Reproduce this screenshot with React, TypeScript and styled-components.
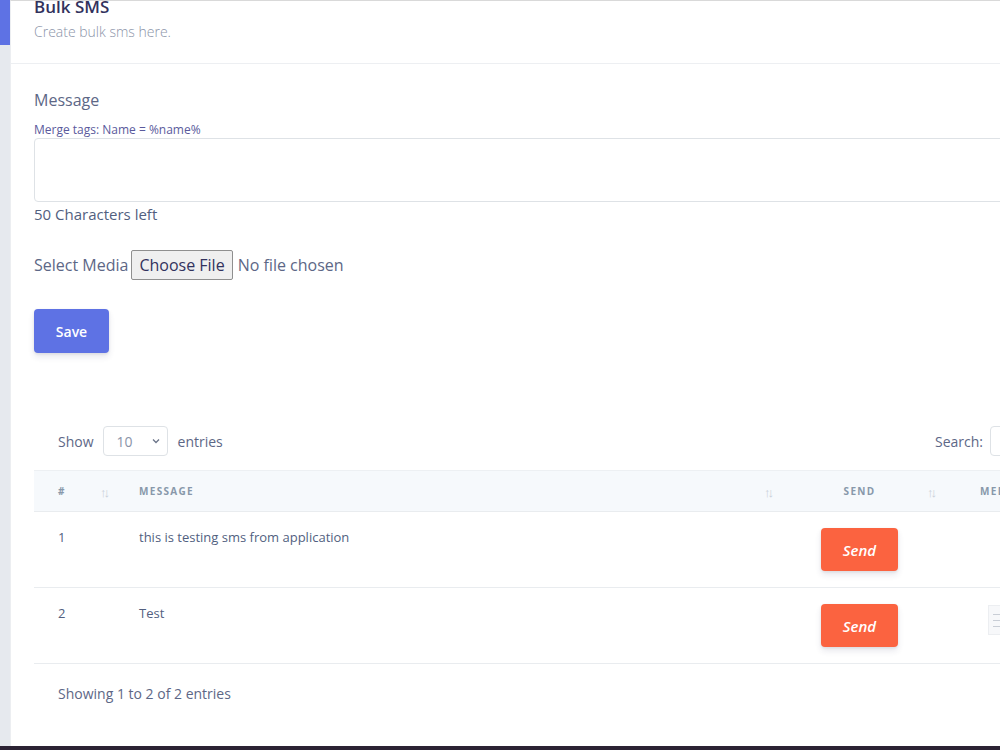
import React from "react";
import styled, { createGlobalStyle } from "styled-components";

const Global = createGlobalStyle`
  html, body { margin: 0; padding: 0; background: #fff; overflow: hidden; }
  body { font-family: "Open Sans", "Noto Sans", sans-serif; color: #525f7f; }
  * { box-sizing: border-box; }
`;

const Page = styled.div`
  display: flex;
  flex-direction: column;
  width: 1000px;
  height: 750px;
  overflow: hidden;
`;

const Main = styled.div`
  flex: 1;
  display: flex;
  min-height: 0;
`;

const SideStrip = styled.div`
  width: 10px;
  flex: none;
  background: #e6e9ee;
  display: flex;
  flex-direction: column;
`;

const ActiveMark = styled.div`
  height: 45px;
  background: #5e72e4;
`;

const Card = styled.div`
  flex: none;
  width: 1120px;
  background: #fff;
  border-top: 1px solid #d9d9d9;
  border-left: 1px solid #eceef1;
  display: flex;
  flex-direction: column;
`;

const CardHeader = styled.div`
  padding: 0 23px;
  height: 63px;
  border-bottom: 1px solid #edeff2;
`;

const Title = styled.h3`
  margin: -6px 0 0;
  font-size: 17px;
  line-height: 24px;
  font-weight: 600;
  color: #32325d;
`;

const Subtitle = styled.p`
  margin: 3px 0 0;
  font-size: 14px;
  line-height: 20px;
  font-weight: 300;
  color: #8a93a8;
`;

const CardBody = styled.div`
  padding: 26px 23px 0;
  display: flex;
  flex-direction: column;
`;

const Label = styled.label`
  font-size: 16px;
  line-height: 20px;
  color: #5d6786;
`;

const MergeTags = styled.div`
  margin-top: 12px;
  font-size: 12px;
  line-height: 16px;
  color: #5a5a9c;
`;

const TextArea = styled.textarea`
  margin-top: 0;
  width: 100%;
  height: 64px;
  border: 1px solid #dee2e6;
  border-radius: 4px;
  resize: none;
  font-family: inherit;
  outline: none;
`;

const CharsLeft = styled.div`
  margin-top: 1px;
  font-size: 15px;
  line-height: 22px;
  color: #525f7f;
`;

const MediaRow = styled.div`
  margin-top: 25px;
  display: flex;
  align-items: center;
  gap: 3px;
  font-size: 16px;
  color: #5d6786;
`;

const FileInput = styled.input`
  font-family: "Open Sans", sans-serif;
  font-size: 16px;
  color: #5d6786;
  &::file-selector-button {
    font-family: "Open Sans", sans-serif;
    font-size: 16px;
    color: #32325d;
    background: #efefef;
    border: 1px solid #8f8f8f;
    border-radius: 2px;
    padding: 3px 7px;
    margin-right: 5px;
  }
`;

const SaveButton = styled.button`
  margin-top: 29px;
  align-self: flex-start;
  width: 75px;
  height: 44px;
  background: #5e72e4;
  color: #fff;
  border: none;
  border-radius: 4px;
  font-family: "Open Sans", sans-serif;
  font-weight: 600;
  font-size: 14px;
  box-shadow: 0 4px 6px rgba(50, 50, 93, 0.11), 0 1px 3px rgba(0, 0, 0, 0.08);
`;

const TableArea = styled.div`
  margin-top: 73px;
  display: flex;
  flex-direction: column;
`;

const Controls = styled.div`
  display: flex;
  justify-content: space-between;
  align-items: center;
  padding: 0 0 0 24px;
  height: 30px;
  width: 966px;
  font-size: 14px;
  color: #5d6786;
`;

const ShowGroup = styled.div`
  display: flex;
  align-items: center;
  gap: 8px;
`;

const SelectBox = styled.div`
  width: 65px;
  height: 30px;
  border: 1px solid #dee2e6;
  border-radius: 4px;
  display: flex;
  align-items: center;
  justify-content: space-between;
  padding: 0 6px 0 13px;
  font-size: 14px;
  color: #8a93a8;
  margin: 0 2px 0 1px;
`;

const SearchGroup = styled.div`
  display: flex;
  align-items: center;
  gap: 7px;
  margin-right: -30px;
`;

const SearchInput = styled.div`
  width: 40px;
  height: 30px;
  border: 1px solid #dee2e6;
  border-radius: 4px;
`;

const Table = styled.table`
  margin-top: 14px;
  width: 1040px;
  border-collapse: collapse;
  table-layout: fixed;
`;

const Th = styled.th<{ $w: number; $center?: boolean; $pl?: number }>`
  width: ${(p) => p.$w}px;
  height: 41px;
  background: #f6f9fc;
  padding: 0 24px 0 ${(p) => p.$pl ?? 24}px;
  text-align: ${(p) => (p.$center ? "center" : "left")};
  font-size: 10px;
  font-weight: 700;
  letter-spacing: 1.3px;
  text-transform: uppercase;
  color: #8898aa;
  position: relative;
  border-top: 1px solid #edf0f3;
  border-bottom: 1px solid #e9ecef;
`;

const SortIcon = styled.span<{ $right: number }>`
  position: absolute;
  right: ${(p) => p.$right}px;
  top: 50%;
  transform: translateY(-42%);
  font-size: 13px;
  letter-spacing: -3px;
  color: #c9d0da;
  font-weight: 400;
`;

const Td = styled.td<{ $center?: boolean }>`
  height: 76px;
  vertical-align: top;
  padding: 15px 24px 0;
  font-size: 13px;
  line-height: 20px;
  color: #525f7f;
  text-align: ${(p) => (p.$center ? "center" : "left")};
  border-bottom: 1px solid #e9ecef;
`;

const SendButton = styled.button`
  margin-top: 1px;
  width: 77px;
  height: 43px;
  background: #fb6340;
  color: #fff;
  border: none;
  border-radius: 4px;
  font-family: "Open Sans", sans-serif;
  font-weight: 600;
  font-style: italic;
  font-size: 15px;
  box-shadow: 0 4px 6px rgba(50, 50, 93, 0.11), 0 1px 3px rgba(0, 0, 0, 0.08);
`;

const Thumb = styled.div`
  margin: 2px 0 0 24px;
  width: 40px;
  height: 30px;
  background: #f7f8fa;
  border: 1px solid #eceef1;
  display: flex;
  flex-direction: column;
  justify-content: center;
  gap: 5px;
  padding: 0 4px;
`;

const ThumbLine = styled.div`
  height: 1px;
  background: #c9ced6;
`;

const Info = styled.div`
  padding: 20px 24px 0;
  font-size: 14px;
  line-height: 20px;
  color: #5d6786;
`;

const BottomBar = styled.div`
  height: 4px;
  flex: none;
  background: #2b2233;
`;

const rows = [
  { id: 1, msg: "this is testing sms from application", media: false },
  { id: 2, msg: "Test", media: true },
];

export default function App() {
  return (
    <>
      <Global />
      <Page>
        <Main>
          <SideStrip>
            <ActiveMark />
          </SideStrip>
          <Card>
            <CardHeader>
              <Title>Bulk SMS</Title>
              <Subtitle>Create bulk sms here.</Subtitle>
            </CardHeader>
            <CardBody>
              <Label>Message</Label>
              <MergeTags>Merge tags: Name = %name%</MergeTags>
              <TextArea />
              <CharsLeft>50 Characters left</CharsLeft>
              <MediaRow>
                <span>Select Media</span>
                <FileInput type="file" />
              </MediaRow>
              <SaveButton>Save</SaveButton>
              <TableArea>
                <Controls>
                  <ShowGroup>
                    <span>Show</span>
                    <SelectBox>
                      <span>10</span>
                      <svg width="10" height="10" viewBox="0 0 10 10">
                        <path d="M2 3.5 L5 6.5 L8 3.5" fill="none" stroke="#6b7489" strokeWidth="1.3" />
                      </svg>
                    </SelectBox>
                    <span>entries</span>
                  </ShowGroup>
                  <SearchGroup>
                    <span>Search:</span>
                    <SearchInput />
                  </SearchGroup>
                </Controls>
                <Table>
                  <thead>
                    <tr>
                      <Th $w={81}>
                        #<SortIcon $right={8}>↑↓</SortIcon>
                      </Th>
                      <Th $w={664}>
                        Message<SortIcon $right={8}>↑↓</SortIcon>
                      </Th>
                      <Th $w={161} $center>
                        Send<SortIcon $right={6}>↑↓</SortIcon>
                      </Th>
                      <Th $w={134} $pl={40}>Media</Th>
                    </tr>
                  </thead>
                  <tbody>
                    {rows.map((r) => (
                      <tr key={r.id}>
                        <Td>{r.id}</Td>
                        <Td>{r.msg}</Td>
                        <Td $center>
                          <SendButton>Send</SendButton>
                        </Td>
                        <Td>
                          {r.media && (
                            <Thumb>
                              <ThumbLine />
                              <ThumbLine />
                              <ThumbLine />
                            </Thumb>
                          )}
                        </Td>
                      </tr>
                    ))}
                  </tbody>
                </Table>
                <Info>Showing 1 to 2 of 2 entries</Info>
              </TableArea>
            </CardBody>
          </Card>
        </Main>
        <BottomBar />
      </Page>
    </>
  );
}
